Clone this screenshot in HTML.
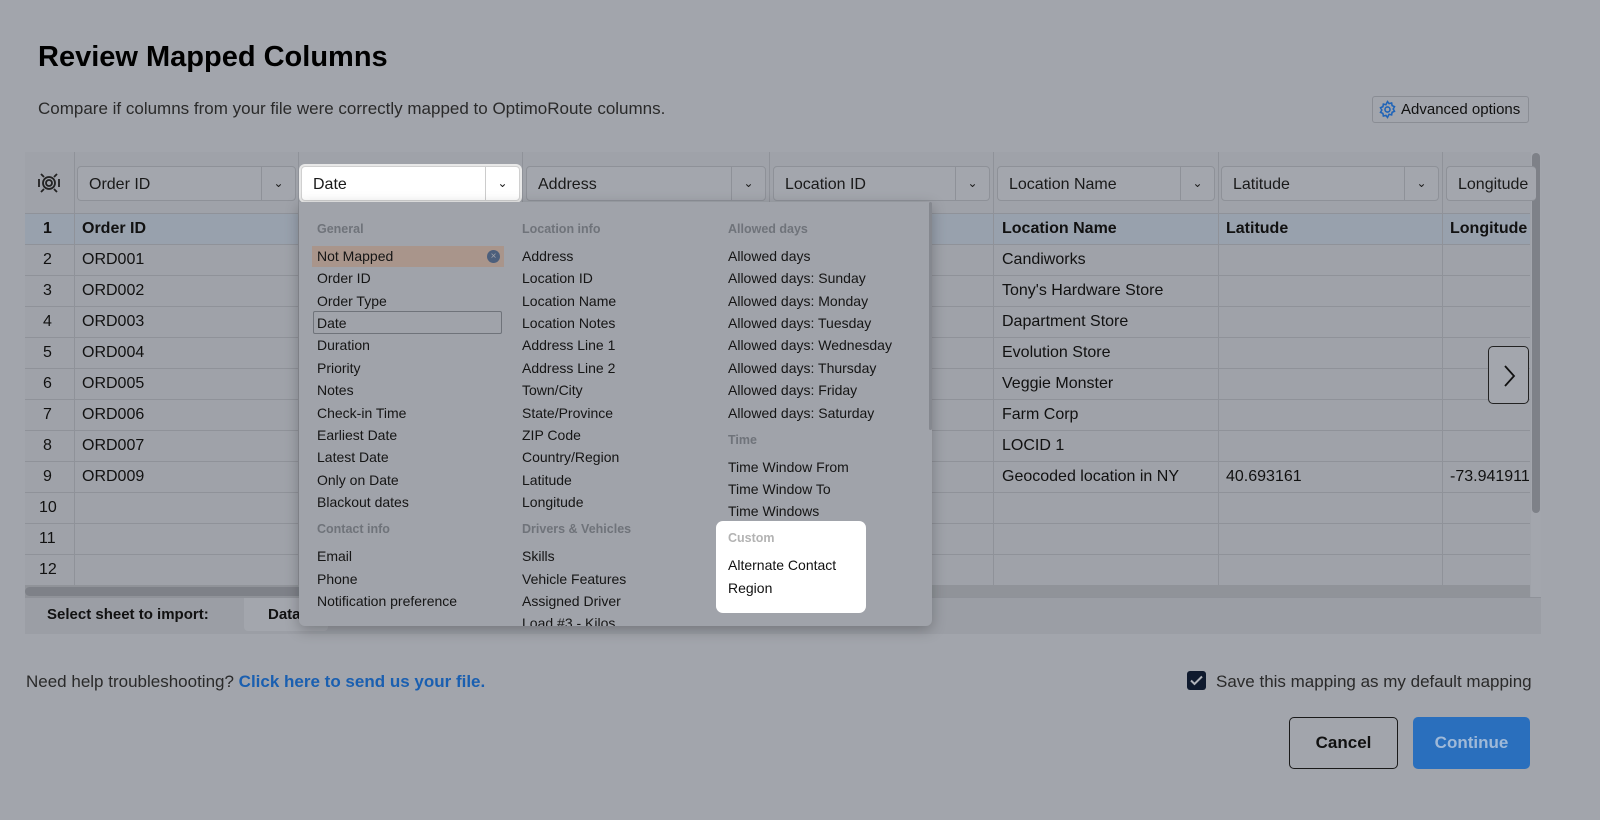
<!DOCTYPE html>
<html><head><meta charset="utf-8"><style>
*{box-sizing:border-box;margin:0;padding:0}
body{width:1600px;height:820px;background:#a2a5ac;font-family:"Liberation Sans",Arial,sans-serif;color:#111;position:relative;overflow:hidden}
.a{position:absolute;white-space:nowrap}
.sel{position:absolute;top:166px;height:35px;border:1px solid #8e9198;border-radius:4px;background:#a3a6ad;font-size:16px;padding:9px 11px;color:#1a1a1a}
.sel .ar{position:absolute;right:0;top:0;width:34px;height:33px;border-left:1px solid #8e9198;text-align:center;line-height:33px;font-size:12px}
.hl{position:absolute;height:1px;background:#8f9299;left:25px;width:1505px}
.vl{position:absolute;width:1px;background:#8f9299;top:213px;height:372px}
.c{position:absolute;font-size:16px}
.dd{position:absolute;left:299px;top:202px;width:633px;height:424px;background:#a0a3aa;border-radius:0 0 6px 6px;box-shadow:0 4px 14px rgba(0,0,0,.25);font-size:14px;overflow:hidden}
.dd .h{position:absolute;font-weight:bold;color:#6f737a;font-size:12.5px}
.dd .i{position:absolute;color:#151515}
</style></head><body>
<div class="a" style="left:38px;top:41px;font-size:29px;font-weight:bold;color:#000">Review Mapped Columns</div>
<div class="a" style="left:38px;top:99px;font-size:17px;color:#2a2a2a">Compare if columns from your file were correctly mapped to OptimoRoute columns.</div>
<div class="a" style="left:1372px;top:96px;width:157px;height:27px;border:1px solid #8a8d94;border-radius:3px;font-size:15px;padding:4px 0 0 28px;color:#111">Advanced options
<svg style="position:absolute;left:5px;top:3px" width="19" height="19" viewBox="0 0 24 24" fill="none" stroke="#1f64b8" stroke-width="2"><circle cx="12" cy="12" r="3.2"/><path d="M12 2l2 2.6 3.2-.8.6 3.2 3 1.4-1.6 2.9 1.6 2.9-3 1.4-.6 3.2-3.2-.8L12 22l-2-2.6-3.2.8-.6-3.2-3-1.4 1.6-2.9-1.6-2.9 3-1.4.6-3.2 3.2.8z"/></svg></div>

<div class="a" style="left:25px;top:152px;width:1516px;height:482px;background:#9fa2a9"></div>
<div class="a" style="left:25px;top:213px;width:1505px;height:31px;background:#98a1ad"></div>
<div class="a" style="left:1531px;top:152px;width:10px;height:445px;background:#a3a6ad"></div>
<div class="a" style="left:1532px;top:153px;width:8px;height:360px;background:#7e8188;border-radius:4px"></div>
<div class="a" style="left:25px;top:585px;width:1505px;height:12px;background:#909399"></div>
<div class="a" style="left:25px;top:587px;width:900px;height:9px;background:#7e8188;border-radius:5px"></div>
<div class="a" style="left:25px;top:597px;width:1516px;height:37px;background:#9b9ea5;border-top:1px solid #8f9299"></div>
<div class="a" style="left:47px;top:606px;font-size:15px;font-weight:bold">Select sheet to import:</div>
<div class="a" style="left:244px;top:598px;width:84px;height:33px;background:#a3a6ad;border-radius:0 0 4px 4px;font-size:15px;font-weight:bold;padding:8px 0 0 24px">Data</div>

<svg class="a" style="left:36px;top:170px" width="26" height="26" viewBox="0 0 26 26" fill="none" stroke="#222" stroke-width="1.8"><circle cx="13" cy="13" r="6"/><circle cx="13" cy="13" r="3"/><path d="M5 4l3 3M21 4l-3 3M5 22l3-3M21 22l-3-3M3 9v8M23 9v8"/></svg>
<div class="sel" style="left:77px;width:219px">Order ID<div class="ar">&#8964;</div></div>
<div class="sel" style="left:301px;width:219px;background:#fff;border-color:#d0d0d0;box-shadow:0 0 0 2px #e8e8e8">Date<div class="ar" style="border-color:#ccc">&#8964;</div></div>
<div class="sel" style="left:526px;width:240px">Address<div class="ar">&#8964;</div></div>
<div class="sel" style="left:773px;width:217px">Location ID<div class="ar">&#8964;</div></div>
<div class="sel" style="left:997px;width:218px">Location Name<div class="ar">&#8964;</div></div>
<div class="sel" style="left:1221px;width:218px">Latitude<div class="ar">&#8964;</div></div>
<div class="sel" style="left:1446px;width:90px;border-right:none">Longitude</div>
<div class="vl" style="left:298px;top:152px;height:61px"></div><div class="vl" style="left:522px;top:152px;height:61px"></div><div class="vl" style="left:769px;top:152px;height:61px"></div><div class="vl" style="left:993px;top:152px;height:61px"></div><div class="vl" style="left:1218px;top:152px;height:61px"></div><div class="vl" style="left:1442px;top:152px;height:61px"></div><div class="vl" style="left:74px;top:152px;height:61px"></div>

<div class="hl" style="top:213px"></div><div class="hl" style="top:244px"></div><div class="hl" style="top:275px"></div><div class="hl" style="top:306px"></div><div class="hl" style="top:337px"></div><div class="hl" style="top:368px"></div><div class="hl" style="top:399px"></div><div class="hl" style="top:430px"></div><div class="hl" style="top:461px"></div><div class="hl" style="top:492px"></div><div class="hl" style="top:523px"></div><div class="hl" style="top:554px"></div>
<div class="vl" style="left:74px"></div><div class="vl" style="left:298px"></div><div class="vl" style="left:993px"></div><div class="vl" style="left:1218px"></div><div class="vl" style="left:1442px"></div>

<div class="c" style="left:43px;top:220px;font-weight:bold">1</div><div class="c" style="left:43px;top:251px">2</div><div class="c" style="left:43px;top:282px">3</div><div class="c" style="left:43px;top:313px">4</div><div class="c" style="left:43px;top:344px">5</div><div class="c" style="left:43px;top:375px">6</div><div class="c" style="left:43px;top:406px">7</div><div class="c" style="left:43px;top:437px">8</div><div class="c" style="left:43px;top:468px">9</div><div class="c" style="left:39px;top:499px">10</div><div class="c" style="left:39px;top:530px">11</div><div class="c" style="left:39px;top:561px">12</div>
<div class="c" style="left:82px;top:220px;font-weight:bold">Order ID</div>
<div class="c" style="left:82px;top:251px">ORD001</div><div class="c" style="left:82px;top:282px">ORD002</div><div class="c" style="left:82px;top:313px">ORD003</div><div class="c" style="left:82px;top:344px">ORD004</div><div class="c" style="left:82px;top:375px">ORD005</div><div class="c" style="left:82px;top:406px">ORD006</div><div class="c" style="left:82px;top:437px">ORD007</div><div class="c" style="left:82px;top:468px">ORD009</div>
<div class="c" style="left:1002px;top:220px;font-weight:bold">Location Name</div><div class="c" style="left:1226px;top:220px;font-weight:bold">Latitude</div><div class="c" style="left:1450px;top:220px;font-weight:bold;width:80px;overflow:hidden">Longitude</div>
<div class="c" style="left:1002px;top:251px">Candiworks</div><div class="c" style="left:1002px;top:282px">Tony's Hardware Store</div><div class="c" style="left:1002px;top:313px">Dapartment Store</div><div class="c" style="left:1002px;top:344px">Evolution Store</div><div class="c" style="left:1002px;top:375px">Veggie Monster</div><div class="c" style="left:1002px;top:406px">Farm Corp</div><div class="c" style="left:1002px;top:437px">LOCID 1</div><div class="c" style="left:1002px;top:468px">Geocoded location in NY</div><div class="c" style="left:1226px;top:468px">40.693161</div><div class="c" style="left:1450px;top:468px;width:80px;overflow:hidden">-73.941911</div>
<div class="a" style="left:1488px;top:346px;width:41px;height:58px;border:1px solid #222;border-radius:5px;background:#a3a6ad"><svg width="41" height="58" viewBox="0 0 41 58" fill="none" stroke="#111" stroke-width="1.8"><path d="M16 19l9 10-9 10"/></svg></div>

<div class="dd">
<div class="h" style="left:18px;top:20px">General</div>
<div class="a" style="left:13px;top:44px;width:192px;height:21px;background:#a9958b"></div>
<div class="a" style="left:188px;top:48px;width:13px;height:13px;border-radius:50%;background:#4c5f7c;color:#a0a3aa;font-size:10px;text-align:center;line-height:13px">×</div>
<div class="a" style="left:14px;top:109px;width:189px;height:23px;border:1px solid #6f737a;border-radius:2px"></div>
<div class="i" style="left:18px;top:46px">Not Mapped</div><div class="i" style="left:18px;top:68px">Order ID</div><div class="i" style="left:18px;top:91px">Order Type</div><div class="i" style="left:18px;top:113px">Date</div><div class="i" style="left:18px;top:135px">Duration</div><div class="i" style="left:18px;top:158px">Priority</div><div class="i" style="left:18px;top:180px">Notes</div><div class="i" style="left:18px;top:203px">Check-in Time</div><div class="i" style="left:18px;top:225px">Earliest Date</div><div class="i" style="left:18px;top:247px">Latest Date</div><div class="i" style="left:18px;top:270px">Only on Date</div><div class="i" style="left:18px;top:292px">Blackout dates</div>
<div class="h" style="left:18px;top:320px">Contact info</div>
<div class="i" style="left:18px;top:346px">Email</div><div class="i" style="left:18px;top:369px">Phone</div><div class="i" style="left:18px;top:391px">Notification preference</div>

<div class="h" style="left:223px;top:20px">Location info</div>
<div class="i" style="left:223px;top:46px">Address</div><div class="i" style="left:223px;top:68px">Location ID</div><div class="i" style="left:223px;top:91px">Location Name</div><div class="i" style="left:223px;top:113px">Location Notes</div><div class="i" style="left:223px;top:135px">Address Line 1</div><div class="i" style="left:223px;top:158px">Address Line 2</div><div class="i" style="left:223px;top:180px">Town/City</div><div class="i" style="left:223px;top:203px">State/Province</div><div class="i" style="left:223px;top:225px">ZIP Code</div><div class="i" style="left:223px;top:247px">Country/Region</div><div class="i" style="left:223px;top:270px">Latitude</div><div class="i" style="left:223px;top:292px">Longitude</div>
<div class="h" style="left:223px;top:320px">Drivers &amp; Vehicles</div>
<div class="i" style="left:223px;top:346px">Skills</div><div class="i" style="left:223px;top:369px">Vehicle Features</div><div class="i" style="left:223px;top:391px">Assigned Driver</div><div class="i" style="left:223px;top:413px">Load #3 - Kilos</div>

<div class="h" style="left:429px;top:20px">Allowed days</div>
<div class="i" style="left:429px;top:46px">Allowed days</div><div class="i" style="left:429px;top:68px">Allowed days: Sunday</div><div class="i" style="left:429px;top:91px">Allowed days: Monday</div><div class="i" style="left:429px;top:113px">Allowed days: Tuesday</div><div class="i" style="left:429px;top:135px">Allowed days: Wednesday</div><div class="i" style="left:429px;top:158px">Allowed days: Thursday</div><div class="i" style="left:429px;top:180px">Allowed days: Friday</div><div class="i" style="left:429px;top:203px">Allowed days: Saturday</div>
<div class="h" style="left:429px;top:231px">Time</div>
<div class="i" style="left:429px;top:257px">Time Window From</div><div class="i" style="left:429px;top:279px">Time Window To</div><div class="i" style="left:429px;top:301px">Time Windows</div>
<div class="a" style="left:630px;top:0;width:3px;height:228px;background:#85888f;border-radius:2px"></div>
</div>
<div class="a" style="left:716px;top:521px;width:150px;height:92px;background:#fff;border-radius:7px">
<div class="a" style="left:12px;top:10px;font-size:12.5px;font-weight:bold;color:#b3b3b3">Custom</div>
<div class="a" style="left:12px;top:36px;font-size:14px">Alternate Contact</div>
<div class="a" style="left:12px;top:59px;font-size:14px">Region</div>
</div>

<div class="a" style="left:26px;top:672px;font-size:17px;color:#2a2a2a">Need help troubleshooting? <b style="color:#1a5fb0">Click here to send us your file.</b></div>
<div class="a" style="left:1187px;top:671px;width:19px;height:19px;background:#0f1a2e;border-radius:3px"><svg width="19" height="19" viewBox="0 0 19 19" fill="none" stroke="#b0b3ba" stroke-width="2"><path d="M4 9.5l3.5 3.5L15 5.5"/></svg></div>
<div class="a" style="left:1216px;top:672px;font-size:17px;color:#2a2a2a">Save this mapping as my default mapping</div>
<div class="a" style="left:1289px;top:717px;width:109px;height:52px;border:1.5px solid #1a1a1a;border-radius:5px;font-size:17px;font-weight:bold;text-align:center;line-height:49px">Cancel</div>
<div class="a" style="left:1413px;top:717px;width:117px;height:52px;background:#2a6fbd;border-radius:5px;font-size:17px;font-weight:bold;text-align:center;line-height:52px;color:#9fb9d8">Continue</div>
</body></html>
